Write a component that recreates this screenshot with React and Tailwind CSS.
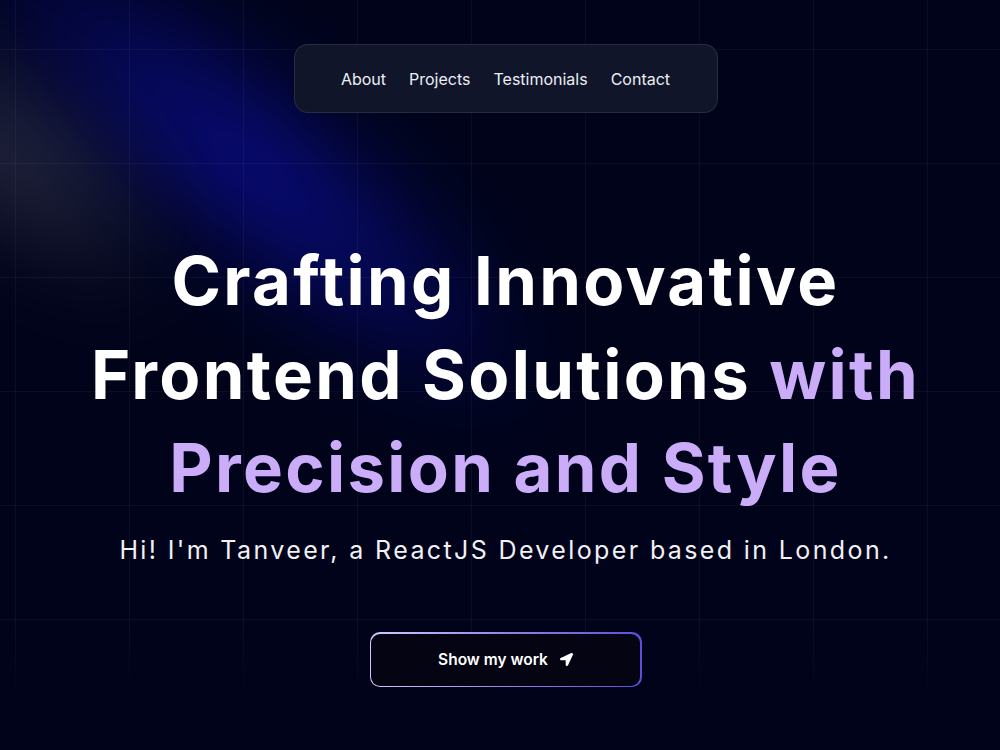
import React from "react";
import { FaLocationArrow } from "react-icons/fa";

export default function App() {
  return (
    <div className="relative w-full h-[750px] overflow-hidden bg-[#000319] font-['Inter',sans-serif]">
      {/* spotlight glows */}
      <div className="pointer-events-none absolute left-[-130px] top-[60px] w-[760px] h-[210px] rotate-[40deg] rounded-[50%] bg-[radial-gradient(ellipse_at_center,rgba(12,14,165,0.8)_0%,rgba(10,12,135,0.4)_45%,transparent_72%)] blur-2xl" />
      <div className="pointer-events-none absolute left-[-200px] top-[70px] w-[420px] h-[170px] rotate-[40deg] rounded-[50%] bg-[radial-gradient(ellipse_at_center,rgba(200,200,230,0.22)_0%,transparent_70%)] blur-2xl" />
      {/* grid */}
      <div className="pointer-events-none absolute inset-0 bg-[linear-gradient(to_right,rgba(255,255,255,0.045)_1px,transparent_1px),linear-gradient(to_bottom,rgba(255,255,255,0.045)_1px,transparent_1px)] bg-[size:114px_114px] bg-[position:15px_49px] [mask-image:linear-gradient(to_bottom,black_84%,transparent_94%)]" />

      <div className="relative flex flex-col items-center pl-[11px]">
        <nav className="mt-[44px] w-[424px] h-[69px] flex items-center justify-center gap-[23px] rounded-[14px] border border-white/[0.1] bg-[#10152a]">
          {["About", "Projects", "Testimonials", "Contact"].map((t) => (
            <span key={t} className="text-[16px] text-[#eceef4]">
              {t}
            </span>
          ))}
        </nav>

        <h1 className="mt-[121px] text-center text-[67px] leading-[93.5px] font-bold tracking-[0.035em] text-white">
          Crafting Innovative
          <br />
          Frontend Solutions <span className="text-[#CBACF9]">with</span>
          <br />
          <span className="text-[#CBACF9]">Precision and Style</span>
        </h1>

        <p className="mt-[17px] text-center text-[25px] tracking-[0.095em] text-[#f1f1f5]">
          Hi! I&apos;m Tanveer, a ReactJS Developer based in London.
        </p>

        <button className="mt-[63px] w-[272px] h-[55px] rounded-[10px] p-[1.5px] bg-[linear-gradient(90deg,#d8c6ff,#8d7fe0_55%,#5b4fd8)]">
          <span className="flex w-full h-full items-center justify-center gap-[12px] rounded-[9px] bg-[#040412] text-white text-[15.5px] font-semibold">
            Show my work
            <FaLocationArrow className="w-[13px] h-[13px]" />
          </span>
        </button>
      </div>
    </div>
  );
}
